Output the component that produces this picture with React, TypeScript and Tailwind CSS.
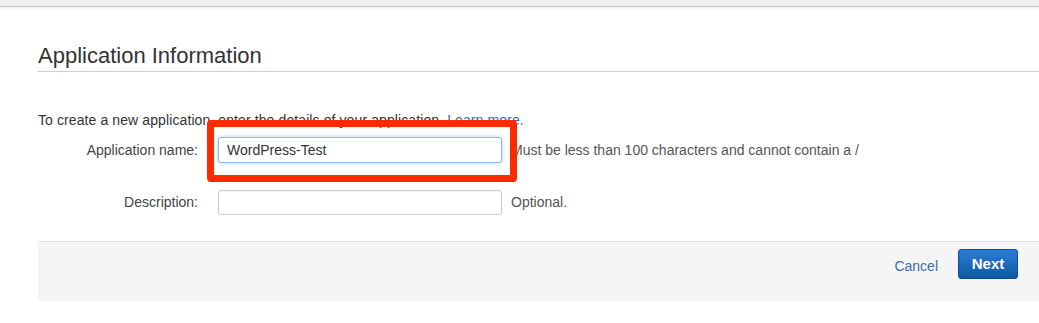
import React from "react";

export default function App() {
  return (
    <div
      className="w-[1039px] h-[323px] bg-white overflow-hidden text-[#333]"
      style={{ fontFamily: '"Liberation Sans", Arial, Helvetica, sans-serif' }}
    >
      <div className="h-[7px] bg-[#f0f0f0] border-b border-[#c4c4c4] shadow-[0_2px_3px_rgba(0,0,0,0.06)]" />
      <div className="pl-[38px]">
        <h1 className="mt-[36px] text-[22px] leading-[26px] font-normal text-[#333] pb-[2px] border-b border-[#cccccc]">
          Application Information
        </h1>
        <p className="mt-[40px] text-[14px] leading-[16px] text-[#333] tracking-[0.1px]">
          To create a new application, enter the details of your application.{" "}
          <a className="text-[#2a6ebb]">Learn more.</a>
        </p>
        <div className="relative pt-[9px]">
          <div className="flex items-center">
            <label className="w-[160px] text-right text-[14px] text-[#444]">
              Application name:
            </label>
            <input
              readOnly
              value="WordPress-Test"
              className="ml-[20px] w-[284px] h-[26px] px-[8px] text-[14px] text-[#333] rounded-[3px] border border-[#8fb9ea] shadow-[0_0_4px_rgba(102,160,230,0.5)] outline-none bg-white"
              style={{ fontFamily: '"Liberation Sans", Arial, sans-serif' }}
            />
            <span className="ml-[9px] text-[14px] text-[#555]">
              Must be less than 100 characters and cannot contain a /
            </span>
          </div>
          <div className="mt-[27px] flex items-center">
            <label className="w-[160px] text-right text-[14px] text-[#444]">
              Description:
            </label>
            <input
              readOnly
              value=""
              className="ml-[20px] w-[284px] h-[25px] px-[8px] text-[14px] rounded-[3px] border border-[#cccccc] shadow-[inset_0_1px_1px_rgba(0,0,0,0.05)] outline-none bg-white"
            />
            <span className="ml-[9px] text-[14px] text-[#555]">Optional.</span>
          </div>
          <div className="absolute left-[169px] top-[-8px] w-[310px] h-[62px] border-[7px] border-[#ff2a00] rounded-[4px] pointer-events-none" />
        </div>
        <div className="mt-[26px] h-[60px] bg-[#f5f5f5] border-t border-[#e0e0e0] flex justify-end items-start pt-[7px] pr-[21px] gap-[20px]">
          <a className="text-[14px] text-[#3d6cb8] mt-[9px] leading-[16px]">Cancel</a>
          <button className="w-[60px] h-[30px] rounded-[3px] border border-[#0c4f98] bg-gradient-to-b from-[#2b7dd4] to-[#0d58a6] text-white font-bold text-[15px]">
            Next
          </button>
        </div>
      </div>
    </div>
  );
}
